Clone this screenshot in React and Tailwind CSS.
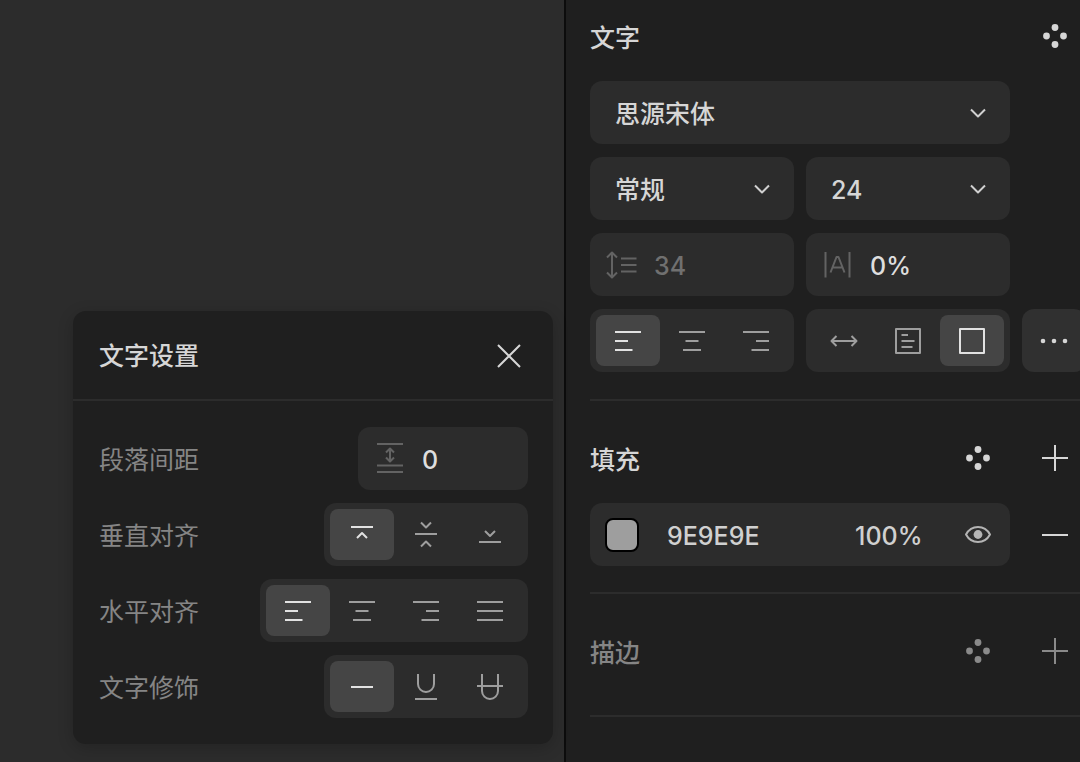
import React from "react";

/* Every icon is drawn around the origin of a 32 x 33 box. */
function Icon({ children, className = "" }) {
  return (
    <svg
      viewBox="-16 -16.5 32 33"
      className={`h-[33px] w-8 shrink-0 ${className}`}
      fill="none"
      stroke="currentColor"
      strokeWidth="2"
      strokeLinejoin="round"
      aria-hidden="true"
    >
      {children}
    </svg>
  );
}

const icons = {
  alignLeft: <path d="M-13 -8.5H13M-13 .5H0M-13 9.5H4.5" />,
  alignCenter: <path d="M-13 -8.5H13M-6.5 .5H6.5M-9 9.5H9" />,
  alignRight: <path d="M-13 -8.5H13M0 .5H13M-4.5 9.5H13" />,
  justify: <path d="M-13 -8.5H13M-13 .5H13M-13 9.5H13" />,
  top: <path d="M-11 -7.5H11M-5 3.5L0 -1.5L5 3.5" />,
  middle: <path d="M-11 -.5H11M-5 -12L0 -7L5 -12M-5 12L0 7L5 12" />,
  bottom: <path d="M-11 7.5H11M-5 -3.5L0 1.5L5 -3.5" />,
  dash: <path d="M-11 .5H11" />,
  underline: <path d="M-8 -12.5V-2.5a8 8 0 0 0 16 0V-12.5M-11 12.5H11" />,
  strike: <path d="M-8 -12.5V4.5a8 8 0 0 0 16 0V-12.5M-13 -.5H13" />,
  autoWidth: <path d="M-12 .5H12M-7.5 -4.5L-12.5 .5L-7.5 5.5M7.5 -4.5L12.5 .5L7.5 5.5" />,
  autoHeight: (
    <path d="M-12 -11.5H12V12.5H-12ZM-6.5 -5.5H0M-6.5 .5H6.5M-6.5 6.5H4.5" />
  ),
  fixedSize: <path d="M-12 -11.5H12V12.5H-12Z" />,
  lineHeight: (
    <path d="M-10 -11.5V12.5M-15 -7L-10 -12L-5 -7M-15 8L-10 13L-5 8M-1 -6H14.5M-1 .5H14.5M-1 7H14.5" />
  ),
  letterSpacing: <path d="M-12.5 -12.5V13M11.5 -12.5V13M-7.5 8L-1.5 -7.5H.5L6.5 8M-5 3H4" />,
  paragraph: (
    <path d="M-13 -14.5H13M-13 7H13M-13 13.5H13M0 -9V2M-4 -6L0 -10L4 -6M-4 -1L0 3L4 -1" />
  ),
  chevron: <path d="M-7 -3L0 4L7 -3" />,
  close: <path d="M-11 -10.5L11 11.5M11 -10.5L-11 11.5" />,
  plus: <path d="M-13 -.5H13M0 -13.5V12.5" />,
  minus: <path d="M-13 .5H13" />,
  styles: (
    <g fill="currentColor" stroke="none">
      <circle cx="0" cy="-9" r="3.4" />
      <circle cx="8.5" cy="-.5" r="3.4" />
      <circle cx="0" cy="8" r="3.4" />
      <circle cx="-8.5" cy="-.5" r="3.4" />
    </g>
  ),
  more: (
    <g fill="currentColor" stroke="none">
      <circle cx="-11" cy=".5" r="2.3" />
      <circle cx="0" cy=".5" r="2.3" />
      <circle cx="11" cy=".5" r="2.3" />
    </g>
  ),
  eye: (
    <>
      <path d="M-12 0C-9 -5.5 -5 -7.5 0 -7.5S9 -5.5 12 0C9 5.5 5 7.5 0 7.5S-9 5.5 -12 0Z" />
      <circle cx="0" cy="0" r="4.4" fill="currentColor" stroke="none" />
    </>
  ),
};

function IconButton({ icon, label, className = "text-[#d6d6d6]" }) {
  return (
    <button
      type="button"
      aria-label={label}
      className={`flex h-[63px] w-16 shrink-0 items-center justify-center ${className}`}
    >
      <Icon>{icons[icon]}</Icon>
    </button>
  );
}

function Segmented({ label, items }) {
  const [active, setActive] = React.useState(items.find((i) => i.on).icon);
  return (
    <div role="group" aria-label={label} className="flex shrink-0 rounded-xl bg-[#2c2c2c] p-1.5">
      {items.map((item) => (
        <button
          key={item.icon}
          type="button"
          aria-label={item.label}
          aria-pressed={active === item.icon}
          onClick={() => setActive(item.icon)}
          className={`flex h-[51px] w-16 items-center justify-center rounded-lg ${
            active === item.icon ? "bg-[#454545] text-[#e2e2e2]" : "text-[#9e9e9e]"
          }`}
        >
          <Icon>{icons[item.icon]}</Icon>
        </button>
      ))}
    </div>
  );
}

function SelectField({ label, value, className }) {
  return (
    <div className={`relative h-[63px] shrink-0 rounded-xl bg-[#2c2c2c] ${className}`}>
      <select
        aria-label={label}
        defaultValue={value}
        className="h-full w-full appearance-none rounded-xl bg-transparent pt-0.5 pr-12 pl-[25px] font-medium text-[#d6d6d6] outline-none"
      >
        <option>{value}</option>
      </select>
      <Icon className="pointer-events-none absolute top-[15px] right-4 text-[#d0d0d0]">
        {icons.chevron}
      </Icon>
    </div>
  );
}

function InputField({ id, label, icon, value, className, tone = "text-[#dedede]" }) {
  return (
    <div className={`flex h-[63px] shrink-0 items-center gap-4 rounded-xl bg-[#2c2c2c] px-4 ${className}`}>
      <Icon className="text-[#636363]">{icons[icon]}</Icon>
      <input
        id={id}
        aria-label={label}
        defaultValue={value}
        className={`w-0 min-w-0 flex-1 bg-transparent pt-0.5 font-medium outline-none ${tone}`}
      />
    </div>
  );
}

function SectionHeader({ title, muted, children }) {
  return (
    <div className="flex h-[63px] items-center">
      <h2 className={`w-[356px] shrink-0 pt-0.5 font-medium ${muted ? "text-[#858585]" : "text-[#d6d6d6]"}`}>
        {title}
      </h2>
      {children}
    </div>
  );
}

function SettingRow({ label, htmlFor, children }) {
  return (
    <div className="flex h-[63px] items-center justify-between text-[#858585]">
      {htmlFor ? (
        <label htmlFor={htmlFor} className="pt-0.5">
          {label}
        </label>
      ) : (
        <span className="pt-0.5">{label}</span>
      )}
      {children}
    </div>
  );
}

function TextSettings() {
  return (
    <section
      aria-label="文字设置"
      className="absolute top-[311px] right-[11px] w-[480px] rounded-[13px] bg-[#1f1f1f] shadow-[0_4px_16px_rgba(0,0,0,0.2)]"
    >
      <header className="flex h-[90px] items-center justify-between border-b-2 border-[#2c2c2c] pr-3 pl-[26px]">
        <h2 className="pt-0.5 font-medium text-[#d6d6d6]">文字设置</h2>
        <IconButton icon="close" label="关闭" />
      </header>
      <div className="flex flex-col gap-[13px] py-[26px] pr-[25px] pl-[26px]">
        <SettingRow label="段落间距" htmlFor="paragraph-gap">
          <InputField id="paragraph-gap" icon="paragraph" label="段落间距" value="0" className="w-[170px]" />
        </SettingRow>
        <SettingRow label="垂直对齐">
          <Segmented
            label="垂直对齐"
            items={[
              { icon: "top", label: "顶部对齐", on: true },
              { icon: "middle", label: "垂直居中" },
              { icon: "bottom", label: "底部对齐" },
            ]}
          />
        </SettingRow>
        <SettingRow label="水平对齐">
          <Segmented
            label="水平对齐"
            items={[
              { icon: "alignLeft", label: "左对齐", on: true },
              { icon: "alignCenter", label: "居中对齐" },
              { icon: "alignRight", label: "右对齐" },
              { icon: "justify", label: "两端对齐" },
            ]}
          />
        </SettingRow>
        <SettingRow label="文字修饰">
          <Segmented
            label="文字修饰"
            items={[
              { icon: "dash", label: "无", on: true },
              { icon: "underline", label: "下划线" },
              { icon: "strike", label: "删除线" },
            ]}
          />
        </SettingRow>
      </div>
    </section>
  );
}

export default function App() {
  return (
    <div className="flex h-screen min-h-[762px] overflow-hidden bg-[#2c2c2c] font-['Inter','Noto_Sans_CJK_SC',sans-serif] text-[25px] leading-8">
      <main className="relative min-w-0 flex-1">
        <TextSettings />
      </main>

      <aside className="w-[516px] shrink-0 overflow-hidden border-l-2 border-[#0c0c0c] bg-[#1f1f1f] pl-6">
        <section className="flex flex-col gap-[13px] border-b-2 border-[#2c2c2c] pt-[5px] pb-[27px]">
          <SectionHeader title="文字">
            <div className="ml-[77px]">
              <IconButton icon="styles" label="文字样式" />
            </div>
          </SectionHeader>
          <SelectField label="字体" value="思源宋体" className="w-[420px]" />
          <div className="flex gap-3">
            <SelectField label="字重" value="常规" className="w-[204px]" />
            <SelectField label="字号" value="24" className="w-[204px]" />
          </div>
          <div className="flex gap-3">
            <InputField icon="lineHeight" label="行高" value="34" className="w-[204px]" tone="text-[#707070]" />
            <InputField icon="letterSpacing" label="字间距" value="0%" className="w-[204px]" />
          </div>
          <div className="flex gap-3">
            <Segmented
              label="对齐"
              items={[
                { icon: "alignLeft", label: "左对齐", on: true },
                { icon: "alignCenter", label: "居中对齐" },
                { icon: "alignRight", label: "右对齐" },
              ]}
            />
            <Segmented
              label="文本框尺寸"
              items={[
                { icon: "autoWidth", label: "自动宽度" },
                { icon: "autoHeight", label: "自动高度" },
                { icon: "fixedSize", label: "固定尺寸", on: true },
              ]}
            />
            <IconButton icon="more" label="更多" className="rounded-xl bg-[#303030] text-[#d6d6d6]" />
          </div>
        </section>

        <section className="flex flex-col gap-[13px] border-b-2 border-[#2c2c2c] py-[26px]">
          <SectionHeader title="填充">
            <div className="flex gap-[13px]">
              <IconButton icon="styles" label="填充样式" />
              <IconButton icon="plus" label="添加填充" />
            </div>
          </SectionHeader>
          <div className="flex gap-[13px]">
            <div className="flex h-[63px] w-[420px] shrink-0 items-center rounded-xl bg-[#2c2c2c] pl-[15px] font-medium text-[#d0d0d0]">
              <button
                type="button"
                aria-label="填充颜色"
                className="mr-7 h-[34px] w-[34px] shrink-0 rounded-lg border-2 border-black bg-[#9e9e9e]"
              />
              <input
                aria-label="颜色值"
                defaultValue="9E9E9E"
                className="w-0 min-w-0 flex-1 bg-transparent pt-0.5 outline-none"
              />
              <input
                aria-label="不透明度"
                defaultValue="100%"
                className="w-[91px] bg-transparent pt-0.5 outline-none"
              />
              <IconButton icon="eye" label="显示或隐藏" className="text-[#b4b4b4]" />
            </div>
            <IconButton icon="minus" label="移除填充" />
          </div>
        </section>

        <section className="border-b-2 border-[#2c2c2c] pt-[26px] pb-8">
          <SectionHeader title="描边" muted>
            <div className="flex gap-[13px]">
              <IconButton icon="styles" label="描边样式" className="text-[#8a8a8a]" />
              <IconButton icon="plus" label="添加描边" className="text-[#8a8a8a]" />
            </div>
          </SectionHeader>
        </section>
      </aside>
    </div>
  );
}
